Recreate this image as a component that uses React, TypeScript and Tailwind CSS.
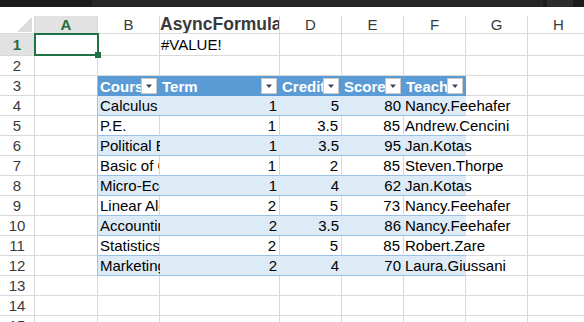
import React from 'react';

const GR = 'border-r border-r-[#d9d9d9]';
const GB = 'border-b border-b-[#d9d9d9]';
const BR = 'border-r border-r-[#9bc2e6]';
const BB = 'border-b border-b-[#9bc2e6]';

type Row = [string, number, number, number, string];

const data: Row[] = [
  ['Calculus', 1, 5, 80, 'Nancy.Feehafer'],
  ['P.E.', 1, 3.5, 85, 'Andrew.Cencini'],
  ['Political Economy', 1, 3.5, 95, 'Jan.Kotas'],
  ['Basic of Computer', 1, 2, 85, 'Steven.Thorpe'],
  ['Micro-Economics', 1, 4, 62, 'Jan.Kotas'],
  ['Linear Algebra', 2, 5, 73, 'Nancy.Feehafer'],
  ['Accounting', 2, 3.5, 86, 'Nancy.Feehafer'],
  ['Statistics', 2, 5, 85, 'Robert.Zare'],
  ['Marketing', 2, 4, 70, 'Laura.Giussani'],
];

const FilterButton = () => (
  <div className="absolute right-[3px] top-[2px] w-[16px] h-[16px] bg-white border border-[#c9c9c9] flex items-center justify-center">
    <svg width="14" height="14" viewBox="0 0 14 14">
      <polygon points="4,5.5 10,5.5 7,9" fill="#3e3f5a" />
    </svg>
  </div>
);

const RowNum = ({ n, active }: { n: number; active?: boolean }) => (
  <div
    className={`flex-none w-[35px] h-full flex items-center justify-center ${GR} ${GB} ${
      active ? 'bg-[#e2e2e2] text-[#1e6e3f] font-bold' : 'text-[#3a3a3a]'
    }`}
  >
    {n}
  </div>
);

const EmptyTail = () => (
  <>
    <div className={`flex-none w-[62px] h-full ${GR} ${GB}`} />
    <div className={`flex-none w-[62px] h-full ${GR} ${GB}`} />
    <div className={`flex-none w-[62px] h-full ${GR} ${GB}`} />
  </>
);

const EmptyRow = ({ n }: { n: number }) => (
  <div className="flex h-[20px]">
    <RowNum n={n} />
    <div className={`flex-none w-[63px] h-full ${GR} ${GB}`} />
    <div className={`flex-none w-[62px] h-full ${GR} ${GB}`} />
    <div className={`flex-none w-[120px] h-full ${GR} ${GB}`} />
    <div className={`flex-none w-[62px] h-full ${GR} ${GB}`} />
    <div className={`flex-none w-[62px] h-full ${GR} ${GB}`} />
    <div className={`flex-none w-[62px] h-full ${GR} ${GB}`} />
    <div className={`flex-none w-[62px] h-full ${GR} ${GB}`} />
    <div className={`flex-none w-[62px] h-full ${GR} ${GB}`} />
  </div>
);

export default function App() {
  return (
    <div className="w-[584px] h-[322px] overflow-hidden bg-white text-black font-['Liberation_Sans',Arial,sans-serif] text-[15px] leading-none">
      {/* window chrome */}
      <div className="h-[7px] flex bg-[#1b1b1b]">
        <div className="w-[92px]" />
        <div className="w-[451px] bg-[#262626]" />
        <div className="w-[4px]" />
        <div className="w-[26px] bg-[#2b2b2b]" />
      </div>
      <div className="h-[9px]" />

      {/* column headers */}
      <div className="flex h-[18px] text-[#3a3a3a]">
        <div className={`flex-none w-[35px] h-full flex items-end justify-end pr-[2px] pb-[1px] ${GR} ${GB}`}>
          <svg width="15" height="15" viewBox="0 0 15 15">
            <polygon points="15,0 15,15 0,15" fill="#dcdcdc" />
          </svg>
        </div>
        <div className={`flex-none w-[63px] h-full flex items-center justify-center bg-[#e2e2e2] text-[#1e6e3f] font-bold ${GR} ${GB}`}>A</div>
        <div className={`flex-none w-[62px] h-full flex items-center justify-center ${GR} ${GB}`}>B</div>
        <div className={`flex-none w-[120px] h-full flex items-center overflow-hidden whitespace-nowrap text-[17.5px] font-bold ${GR} ${GB}`}>
          AsyncFormula
        </div>
        <div className={`flex-none w-[62px] h-full flex items-center justify-center ${GR} ${GB}`}>D</div>
        <div className={`flex-none w-[62px] h-full flex items-center justify-center ${GR} ${GB}`}>E</div>
        <div className={`flex-none w-[62px] h-full flex items-center justify-center ${GR} ${GB}`}>F</div>
        <div className={`flex-none w-[62px] h-full flex items-center justify-center ${GR} ${GB}`}>G</div>
        <div className={`flex-none w-[62px] h-full flex items-center justify-center ${GR} ${GB}`}>H</div>
      </div>

      {/* row 1 */}
      <div className="flex h-[22px]">
        <RowNum n={1} active />
        <div className={`relative flex-none w-[63px] h-full ${GR} ${GB}`}>
          <div className="absolute z-10 left-[-1px] top-[-1px] w-[65px] h-[23px] border-2 border-[#1f7244]">
            <div className="absolute right-[-4px] bottom-[-4px] w-[6px] h-[6px] bg-[#1f7244]" />
          </div>
        </div>
        <div className={`flex-none w-[62px] h-full ${GR} ${GB}`} />
        <div className={`flex-none w-[120px] h-full flex items-center pl-[1px] ${GR} ${GB}`}>#VALUE!</div>
        <div className={`flex-none w-[62px] h-full ${GR} ${GB}`} />
        <EmptyTail />
        <div className={`flex-none w-[62px] h-full ${GR} ${GB}`} />
      </div>

      <EmptyRow n={2} />

      {/* table header row 3 */}
      <div className="flex h-[20px]">
        <RowNum n={3} />
        <div className={`flex-none w-[63px] h-full ${BR} ${GB}`} />
        {[
          ['Course', 'w-[62px]'],
          ['Term', 'w-[120px]'],
          ['Credit', 'w-[62px]'],
          ['Score', 'w-[62px]'],
          ['Teacher', 'w-[62px]'],
        ].map(([label, w]) => (
          <div
            key={label}
            className={`relative flex-none ${w} h-full flex items-center pl-[2px] bg-[#5b9bd5] text-white font-bold overflow-hidden whitespace-nowrap`}
          >
            {label}
            <FilterButton />
          </div>
        ))}
        <div className={`flex-none w-[62px] h-full ${GR} ${GB}`} />
        <div className={`flex-none w-[62px] h-full ${GR} ${GB}`} />
      </div>

      {/* table body */}
      {data.map((r, i) => {
        const band = i % 2 === 0;
        const bg = band ? 'bg-[#ddebf7]' : 'bg-white';
        const inner = band ? '' : GR;
        return (
          <div key={i} className="flex h-[20px]">
            <RowNum n={i + 4} />
            <div className={`flex-none w-[63px] h-full ${BR} ${GB}`} />
            <div className={`flex-none w-[62px] h-full flex items-center pl-[2px] overflow-hidden whitespace-nowrap ${bg} ${inner} ${BB}`}>
              {r[0]}
            </div>
            <div className={`flex-none w-[120px] h-full flex items-center justify-end pr-[3px] ${bg} ${inner} ${BB}`}>{r[1]}</div>
            <div className={`flex-none w-[62px] h-full flex items-center justify-end pr-[3px] ${bg} ${inner} ${BB}`}>{r[2]}</div>
            <div className={`flex-none w-[62px] h-full flex items-center justify-end pr-[3px] ${bg} ${inner} ${BB}`}>{r[3]}</div>
            <div className={`relative z-[1] flex-none w-[62px] h-full flex items-center pl-[1px] whitespace-nowrap overflow-visible ${bg} ${BB}`}>
              {r[4]}
            </div>
            <div className={`flex-none w-[62px] h-full ${GR} ${GB}`} />
            <div className={`flex-none w-[62px] h-full ${GR} ${GB}`} />
          </div>
        );
      })}

      <EmptyRow n={13} />
      <EmptyRow n={14} />
      <EmptyRow n={15} />
    </div>
  );
}
